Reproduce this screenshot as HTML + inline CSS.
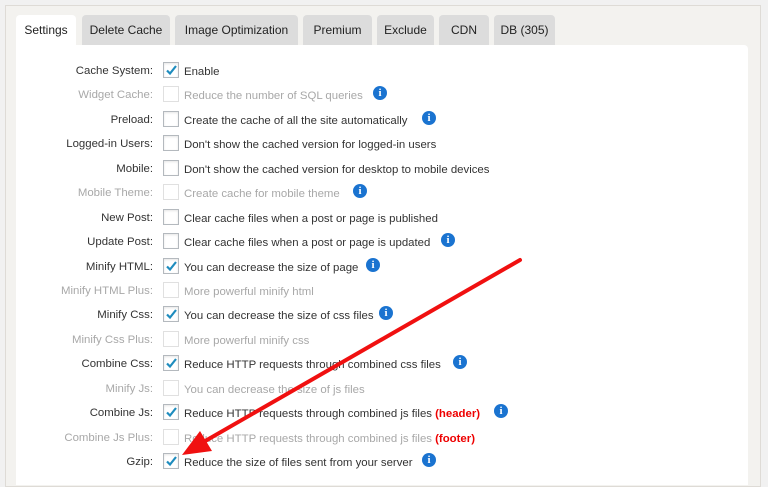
<!DOCTYPE html>
<html><head><style>
body{margin:0;width:768px;height:473px;overflow:hidden;background:#f1f1f1;font-family:"Liberation Sans",sans-serif;font-size:11.4px;color:#333;position:relative}
.outer{position:absolute;left:5px;top:5px;width:754px;height:480px;border:1px solid #dedbd6;background:#f3f2ef}
.tab{position:absolute;top:15px;height:30px;line-height:31px;text-align:center;background:#dcdcdc;border-radius:4px 4px 0 0;font-size:12px;color:#222}
.tab.a{background:#fff;height:31px}
.panel{position:absolute;left:16px;top:45px;width:732px;height:440px;background:#fff;border-radius:0 4px 0 0}
.row{position:absolute;left:0;height:20px;line-height:20px;width:700px}
.lab{position:absolute;right:547px;text-align:right;white-space:nowrap;top:1px}
.cb{position:absolute;left:163px;top:2px;width:14px;height:14px;border:1px solid #b4b9be;background:#fff;box-shadow:inset 0 1px 2px rgba(0,0,0,.1)}
.cb svg{position:absolute;left:0;top:0}
.txt{position:absolute;left:184px;white-space:nowrap;top:2px}
.dis .lab,.dis .txt{color:#a8a8a8}
.dis .cb{border-color:#e0e0e0;box-shadow:none}
.i{position:absolute;top:2px;width:14px;height:14px;border-radius:50%;background:#1a73d0;color:#fff;font:bold 11px/14px "Liberation Serif",serif;text-align:center}
.r{color:#e00;font-weight:bold}
</style></head><body>
<div class="outer"></div>
<div class="tab a" style="left:16px;width:60px">Settings</div>
<div class="tab" style="left:82px;width:88px">Delete Cache</div>
<div class="tab" style="left:175px;width:123px">Image Optimization</div>
<div class="tab" style="left:303px;width:69px">Premium</div>
<div class="tab" style="left:377px;width:57px">Exclude</div>
<div class="tab" style="left:439px;width:50px">CDN</div>
<div class="tab" style="left:494px;width:61px">DB (305)</div>
<div class="panel"></div>
<div id="rows"></div>
<svg width="768" height="473" style="position:absolute;left:0;top:0">
<line x1="520" y1="260" x2="200" y2="444" stroke="#f01010" stroke-width="4" stroke-linecap="round"/>
<polygon points="182,455 212,451 200,431" fill="#f01010"/>
</svg>
<script>
var C='<svg width="14" height="14"><path d="M3 7.5 L6 10.5 L12 3" stroke="#1e8cbe" stroke-width="2.2" fill="none"/></svg>';
var rows=[
["Cache System:","Enable",1,0,0],
["Widget Cache:","Reduce the number of SQL queries",0,1,380],
["Preload:","Create the cache of all the site automatically",0,0,429],
["Logged-in Users:","Don't show the cached version for logged-in users",0,0,0],
["Mobile:","Don't show the cached version for desktop to mobile devices",0,0,0],
["Mobile Theme:","Create cache for mobile theme",0,1,360],
["New Post:","Clear cache files when a post or page is published",0,0,0],
["Update Post:","Clear cache files when a post or page is updated",0,0,448],
["Minify HTML:","You can decrease the size of page",1,0,373],
["Minify HTML Plus:","More powerful minify html",0,1,0],
["Minify Css:","You can decrease the size of css files",1,0,386],
["Minify Css Plus:","More powerful minify css",0,1,0],
["Combine Css:","Reduce HTTP requests through combined css files",1,0,460],
["Minify Js:","You can decrease the size of js files",0,1,0],
["Combine Js:","Reduce HTTP requests through combined js files <span class=r>(header)</span>",1,0,501],
["Combine Js Plus:","Reduce HTTP requests through combined js files <span class=r>(footer)</span>",0,1,0],
["Gzip:","Reduce the size of files sent from your server",1,0,429]];
var h='';
rows.forEach(function(r,k){var y=60+k*24.44;
h+='<div class="row'+(r[3]?' dis':'')+'" style="top:'+y+'px"><span class="lab">'+r[0]+'</span><span class="cb">'+(r[2]?C:'')+'</span><span class="txt">'+r[1]+'</span>'+(r[4]?'<span class="i" style="left:'+(r[4]-7)+'px">i</span>':'')+'</div>';});
document.getElementById('rows').innerHTML=h;
</script>
</body></html>
